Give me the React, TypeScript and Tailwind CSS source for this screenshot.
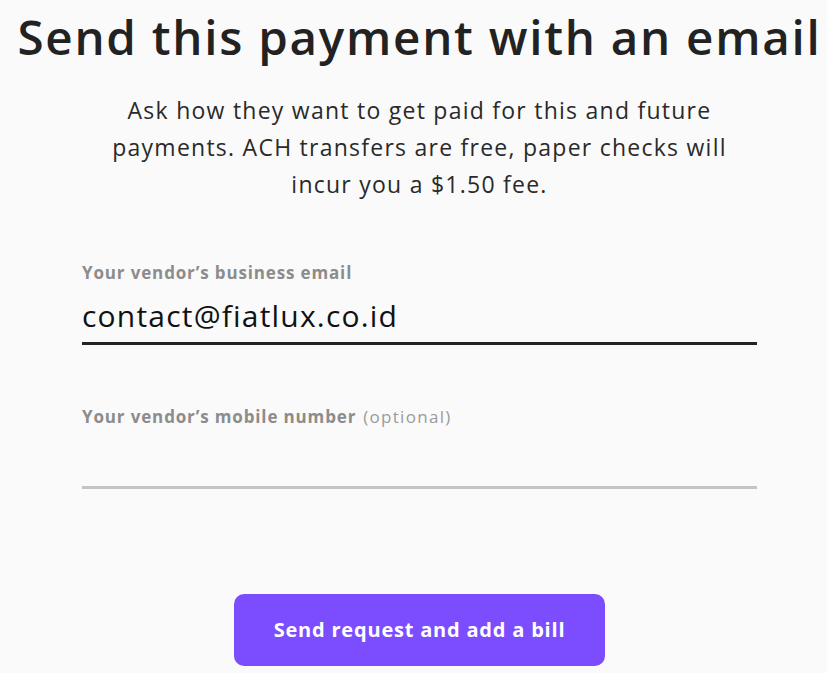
export default function App() {
  return (
    <div className="min-h-[673px] bg-[#fafafa] pl-[12px] flex flex-col items-center font-['Open_Sans',sans-serif] text-[#222]">
      <h1 className="mt-[7px] text-[47.5px] leading-[60px] font-semibold tracking-[1.75px] whitespace-nowrap">
        Send this payment with an email
      </h1>
      <p className="mt-[25px] w-[660px] text-center text-[23px] leading-[37px] tracking-[1.25px] text-[#2a2a2a]">
        Ask how they want to get paid for this and future payments. ACH transfers are free, paper checks will incur you a $1.50 fee.
      </p>

      <form className="mt-[60px] w-[675px] flex flex-col">
        <label className="text-[17px] leading-[20px] font-bold tracking-[0.85px] text-[#8c8c8c]">
          Your vendor’s business email
        </label>
        <input
          type="email"
          defaultValue="contact@fiatlux.co.id"
          className="mt-[5px] h-[57px] bg-transparent outline-none text-[30px] tracking-[1.2px] text-[#111] border-b-[3px] border-[#232323]"
        />

        <label className="mt-[62px] text-[17px] leading-[20px] font-bold tracking-[0.85px] text-[#8c8c8c]">
          Your vendor’s mobile number
          <span className="ml-[7px] font-normal tracking-[1.3px] text-[#9b9b9b]">(optional)</span>
        </label>
        <input
          type="tel"
          className="mt-[5px] h-[57px] bg-transparent outline-none text-[30px] border-b-[3px] border-[#c4c4c4]"
        />
      </form>

      <button
        type="button"
        className="mt-[105px] w-[371px] h-[72px] rounded-[10px] bg-[#7b4dff] text-white text-[20px] font-bold tracking-[0.8px]"
      >
        Send request and add a bill
      </button>
    </div>
  );
}
